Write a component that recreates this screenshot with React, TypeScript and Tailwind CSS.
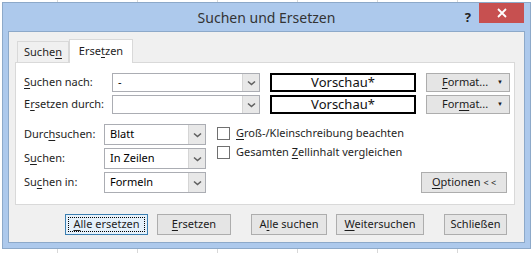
import React from 'react';

const Chevron: React.FC = () => (
  <svg width="9" height="6" viewBox="0 0 9 6" fill="none">
    <path d="M1 1.5 L4.5 4.5 L8 1.5" stroke="#606060" strokeWidth="1.6" />
  </svg>
);

const Combo: React.FC<{ value?: string; className?: string }> = ({ value = '', className = '' }) => (
  <div className={`flex h-full items-stretch border border-[#abadb3] bg-white ${className}`}>
    <div className="flex flex-1 items-center pl-[5px] text-black">{value}</div>
    <div className="flex w-[17px] items-center justify-center border-l border-[#d5d5d5] bg-[#e8e8e8]">
      <Chevron />
    </div>
  </div>
);

const Btn: React.FC<{ children: React.ReactNode; className?: string }> = ({ children, className = '' }) => (
  <div
    className={`flex h-[21px] items-center justify-center whitespace-nowrap border border-[#adadad] bg-[#e5e5e5] text-[#1b1b1b] ${className}`}
  >
    <span>{children}</span>
  </div>
);

const FormatBtn: React.FC<{ children: React.ReactNode }> = ({ children }) => (
  <div className="flex h-[19px] items-center justify-between whitespace-nowrap border border-[#adadad] bg-[#e5e5e5] pl-[15px] pr-[6px] text-[#1b1b1b]">
    <span>{children}</span>
    <span className="text-[6px]">▼</span>
  </div>
);

const Check: React.FC<{ children: React.ReactNode }> = ({ children }) => (
  <div className="flex h-[16px] items-center gap-[6px]">
    <div className="h-[13px] w-[13px] border border-[#707070] bg-white" />
    <span>{children}</span>
  </div>
);

const U: React.FC<{ children: React.ReactNode }> = ({ children }) => (
  <span className="underline decoration-1 underline-offset-2">{children}</span>
);

const Label: React.FC<{ children: React.ReactNode }> = ({ children }) => (
  <div className="flex items-center whitespace-nowrap">
    <span>{children}</span>
  </div>
);

const App: React.FC = () => {
  return (
    <div
      className="h-[253px] w-[532px] overflow-hidden bg-white bg-[linear-gradient(to_right,#d8d8d8_1px,transparent_1px)] bg-[length:80px_253px] bg-[position:57px_0] pl-[2px] pt-[2px] text-[11px] text-[#1e1e1e]"
      style={{ fontFamily: '"Segoe UI", "Noto Sans", "Open Sans", sans-serif' }}
    >
      <div className="flex h-[247px] w-[529px] flex-col border border-[#8da9c9] bg-[#adc9ec]">
        {/* title bar */}
        <div className="relative flex h-[28px] items-center justify-center">
          <span className="pt-[1px] text-[14px] text-[#333]">Suchen und Ersetzen</span>
          <div className="absolute right-[6px] top-0 flex items-start">
            <span className="mr-[8px] mt-[5px] text-[13px] font-bold text-[#222]">?</span>
            <div className="flex h-[20px] w-[45px] items-center justify-center bg-[#c75050]">
              <svg width="10" height="10" viewBox="0 0 10 10">
                <path d="M1 1 L9 9 M9 1 L1 9" stroke="white" strokeWidth="1.8" />
              </svg>
            </div>
          </div>
        </div>

        {/* client area */}
        <div className="mx-[5px] mb-[5px] flex flex-1 flex-col border border-[#8da9c9] bg-[#f0f0f0] pl-[6px] pr-[7px] pt-[7px]">
          {/* tabs */}
          <div className="flex h-[23px] items-end pl-[2px]">
            <div className="flex h-[21px] w-[52px] items-center justify-center border border-b-0 border-[#d9d9d9] bg-[#f0f0f0]">
              <span>
                Suche<U>n</U>
              </span>
            </div>
            <div className="relative z-10 -mb-px flex h-[24px] w-[64px] items-center justify-center border border-b-0 border-[#d9d9d9] bg-white">
              <span>
                Erse<U>t</U>zen
              </span>
            </div>
          </div>

          {/* panel */}
          <div className="flex h-[143px] w-[500px] flex-col border border-[#d9d9d9] bg-white pl-[8px] pt-[10px]">
            <div className="grid grid-cols-[78px_148px_146px_84px] grid-rows-[19px_19px] gap-x-[10px] gap-y-[3px]">
              <Label>
                <U>S</U>uchen nach:
              </Label>
              <Combo value="-" />
              <div className="flex items-center justify-center border-2 border-black text-[13px] text-[#111]">Vorschau*</div>
              <FormatBtn>
                <U>F</U>ormat...
              </FormatBtn>
              <Label>
                E<U>r</U>setzen durch:
              </Label>
              <Combo />
              <div className="flex items-center justify-center border-2 border-black text-[13px] text-[#111]">Vorschau*</div>
              <FormatBtn>
                For<U>m</U>at...
              </FormatBtn>
            </div>

            <div className="mt-[10px] flex">
              <div className="grid grid-cols-[80px_102px] grid-rows-[21px_21px_21px] gap-y-[3px]">
                <Label>
                  Durc<U>h</U>suchen:
                </Label>
                <Combo value="Blatt" />
                <Label>
                  S<U>u</U>chen:
                </Label>
                <Combo value="In Zeilen" />
                <Label>
                  Su<U>c</U>hen in:
                </Label>
                <Combo value="Formeln" />
              </div>
              <div className="ml-[11px] flex flex-col gap-[3px] pt-[1px]">
                <Check>
                  <U>G</U>roß-/Kleinschreibung beachten
                </Check>
                <Check>
                  Gesamten <U>Z</U>ellinhalt vergleichen
                </Check>
              </div>
              <div className="ml-auto mr-[7px] flex items-end">
                <Btn className="h-[20px] w-[86px]">
                  <U>O</U>ptionen&nbsp;<span className="text-[9px]">&lt; &lt;</span>
                </Btn>
              </div>
            </div>
          </div>

          {/* bottom buttons */}
          <div className="mt-[9px] flex pl-[50px]">
            <div className="flex h-[21px] w-[83px] items-center justify-center border border-[#3c7fb1] bg-[#e5f1fb] p-[2px]">
              <div className="flex h-full w-full items-center justify-center border border-dotted border-black">
                <span>
                  <U>A</U>lle ersetzen
                </span>
              </div>
            </div>
            <Btn className="ml-[9px] w-[74px]">
              <U>E</U>rsetzen
            </Btn>
            <Btn className="ml-[20px] w-[76px]">
              A<U>l</U>le suchen
            </Btn>
            <Btn className="ml-[9px] w-[88px]">
              <U>W</U>eitersuchen
            </Btn>
            <Btn className="ml-[20px] w-[63px]">Schließen</Btn>
          </div>
        </div>
      </div>
    </div>
  );
};

export default App;
